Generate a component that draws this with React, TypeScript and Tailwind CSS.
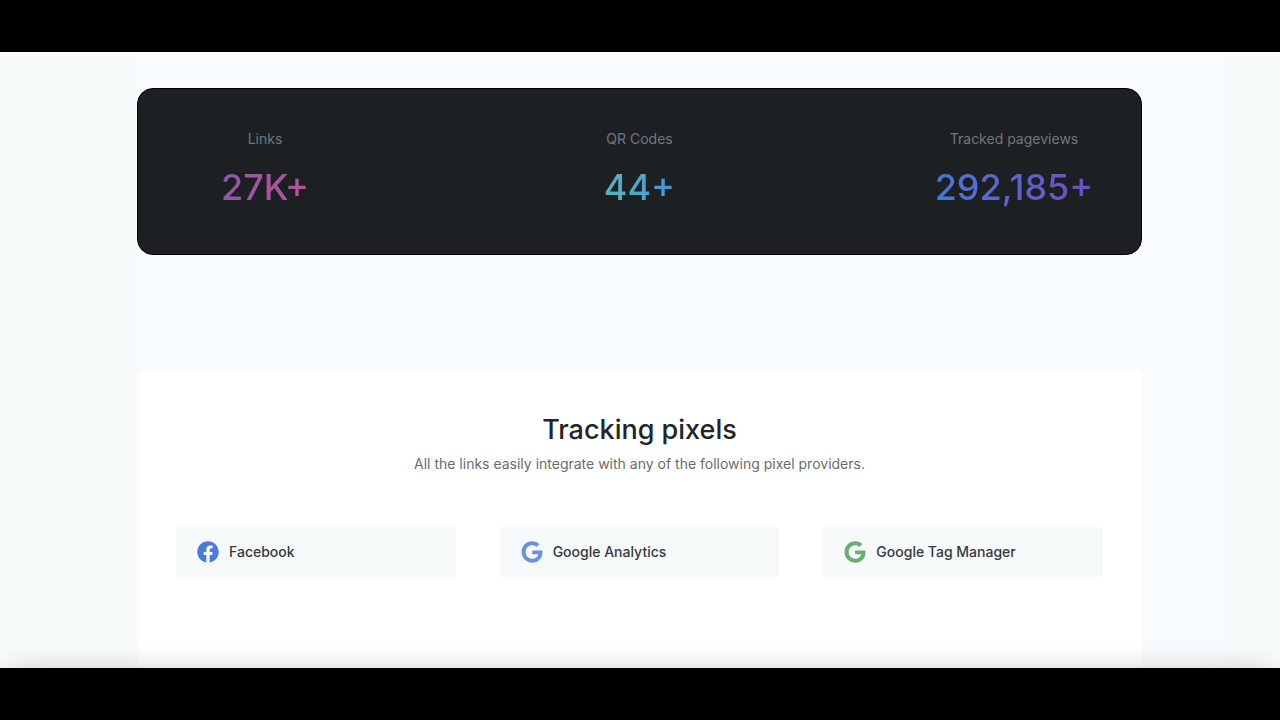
import type { ReactNode } from "react";
import { FaFacebook, FaGoogle } from "react-icons/fa";

type Stat = { label: string; value: string; gradient: string };

const stats: Stat[] = [
  { label: "Links", value: "27K+", gradient: "from-[#8f55ac] to-[#b9519a]" },
  { label: "QR Codes", value: "44+", gradient: "from-[#5cb3b8] to-[#4492dc]" },
  { label: "Tracked pageviews", value: "292,185+", gradient: "from-[#4677db] to-[#6a4fbd]" },
];

type Provider = { name: string; icon: ReactNode };

const providers: Provider[] = [
  { name: "Facebook", icon: <FaFacebook className="size-[22px] text-[#4a7bdc]" aria-hidden /> },
  { name: "Google Analytics", icon: <FaGoogle className="size-[22px] text-[#6a92db]" aria-hidden /> },
  { name: "Google Tag Manager", icon: <FaGoogle className="size-[22px] text-[#69ae6d]" aria-hidden /> },
];

function StatItem({ label, value, gradient }: Stat) {
  return (
    <div className="flex w-[178px] flex-col items-center gap-3">
      <dt className="text-sm leading-6 text-[#70777e]">{label}</dt>
      <dd className={`bg-linear-to-r bg-clip-text text-4xl leading-12 font-medium text-transparent ${gradient}`}>
        {value}
      </dd>
    </div>
  );
}

function ProviderCard({ name, icon }: Provider) {
  return (
    <li className="flex h-[50px] items-center gap-[10px] rounded-sm bg-[#f6f9fa] px-[21px] text-sm font-medium text-[#353a3d]">
      {icon}
      <span>{name}</span>
    </li>
  );
}

export default function App() {
  return (
    <div className="flex min-h-screen flex-col bg-black font-['Inter','Liberation_Sans',sans-serif]">
      <div className="h-[52px] shrink-0" />
      <main className="flex flex-1 flex-col bg-[linear-gradient(to_right,#f7fbfb_10%,#f8fcff_12%,#f8fcff_94%,#f7fbfc_96%)] pt-9 pr-[138px] pl-[137px]">
        <dl className="flex justify-between rounded-2xl border border-black bg-[#1d2022] px-[38px] pt-[38px] pb-[43px]">
          {stats.map((stat) => (
            <StatItem key={stat.label} {...stat} />
          ))}
        </dl>
        <section className="mt-[116px] flex-1 rounded-t-sm bg-white px-[39px] pt-10 text-center">
          <h2 className="text-[27px] leading-[38px] font-medium text-[#222526]">Tracking pixels</h2>
          <p className="mt-[3px] text-sm leading-6 text-[#686d70]">
            All the links easily integrate with any of the following pixel providers.
          </p>
          <ul className="mt-[51px] grid grid-cols-3 gap-11">
            {providers.map((provider) => (
              <ProviderCard key={provider.name} {...provider} />
            ))}
          </ul>
        </section>
      </main>
      <div className="relative h-[52px] shrink-0 bg-black shadow-[0_0_32px_-8px_rgba(0,0,0,0.3)]" />
    </div>
  );
}
